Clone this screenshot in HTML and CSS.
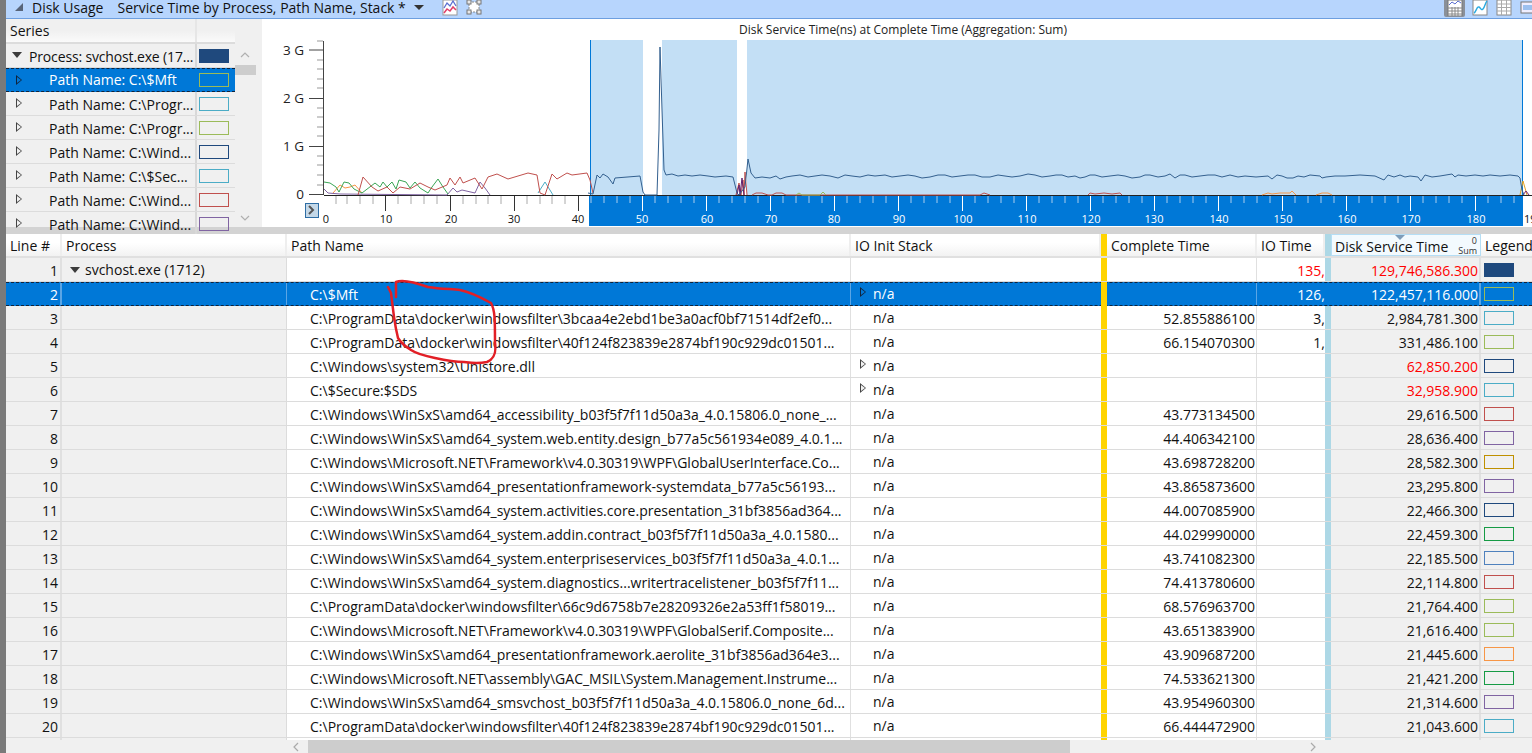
FILE: index.html
```html
<!DOCTYPE html>
<html lang="en">
<head>
<meta charset="utf-8">
<title>Disk Usage</title>
<link rel="stylesheet" href="styles.css">
</head>
<body>
<div class="app">
  <header class="bar">
    <span class="bar-collapse"></span>
    <span class="bar-title">Disk Usage</span>
    <span class="bar-preset">Service Time by Process, Path Name, Stack *</span>
    <span class="bar-drop"></span>
    <svg class="ic" viewBox="0 0 16 16"><rect x="1" y="0" width="14" height="15" fill="#fff" stroke="#999"/><path d="M2 8l3-5 3 3 3-5 3 5" fill="none" stroke="#5a6ed0" stroke-width="1.300"/><path d="M2 13l3-4 3 2 3-4 3 3" fill="none" stroke="#e0406a" stroke-width="1.500"/></svg>
    <svg class="ic ic2" viewBox="0 0 16 16"><rect x="3" y="2" width="10" height="10" fill="#fff" stroke="#888" stroke-dasharray="2 1"/><rect x="1" y="0" width="4" height="4" fill="#e8e8e8" stroke="#777"/><rect x="11" y="0" width="4" height="4" fill="#e8e8e8" stroke="#777"/><rect x="1" y="10" width="4" height="4" fill="#e8e8e8" stroke="#777"/><rect x="11" y="10" width="4" height="4" fill="#e8e8e8" stroke="#777"/></svg>
    <span class="bar-fill"></span>
    <span class="view-sel"><svg class="ic" viewBox="0 0 16 16"><rect x="1" y="0" width="14" height="16" fill="#fff" stroke="#777"/><path d="M2 5l3-3 3 2 3-3 3 2" fill="none" stroke="#5a6ed0"/><path d="M1 8h14M1 11h14M1 14h14M5 7v9M8 7v9M11 7v9" stroke="#888"/></svg></span>
    <svg class="ic view" viewBox="0 0 16 16"><rect x="1" y="0" width="14" height="15" fill="#fff" stroke="#888"/><path d="M2 13c2-1 3-7 5-6s2 4 4 2 2-6 4-8" fill="none" stroke="#29a9e0" stroke-width="1.400"/></svg>
    <svg class="ic view" viewBox="0 0 16 16"><rect x="1" y="0" width="14" height="15" fill="#fff" stroke="#888"/><path d="M1 4h14M1 7.500h14M1 11h14M5.500 0v15M10.500 0v15" stroke="#aaa"/></svg>
    <svg class="ic view view-last" viewBox="0 0 16 16"><rect x="1" y="2" width="15" height="11" fill="#eef" stroke="#777"/><rect x="3" y="5" width="12" height="5" fill="#9cc0ee"/></svg>
  </header>

  <section class="top">
    <aside class="series">
      <div class="series-head"><span class="sh-name">Series</span><span class="sh-key"></span></div>
      <div class="series-row"><span class="tw tw-open"></span><span class="sr-name sr-root">Process: svchost.exe (17...</span><span class="sr-key"><i class="sw fill navy"></i></span></div>
      <div class="series-row sel"><span class="tw tw-closed"></span><span class="sr-name">Path Name: C:\$Mft</span><span class="sr-key"><i class="sw olive"></i></span></div>
      <div class="series-row"><span class="tw tw-closed"></span><span class="sr-name">Path Name: C:\Progr...</span><span class="sr-key"><i class="sw cyan"></i></span></div>
      <div class="series-row"><span class="tw tw-closed"></span><span class="sr-name">Path Name: C:\Progr...</span><span class="sr-key"><i class="sw olive"></i></span></div>
      <div class="series-row"><span class="tw tw-closed"></span><span class="sr-name">Path Name: C:\Wind...</span><span class="sr-key"><i class="sw navy"></i></span></div>
      <div class="series-row"><span class="tw tw-closed"></span><span class="sr-name">Path Name: C:\$Sec...</span><span class="sr-key"><i class="sw cyan"></i></span></div>
      <div class="series-row"><span class="tw tw-closed"></span><span class="sr-name">Path Name: C:\Wind...</span><span class="sr-key"><i class="sw red"></i></span></div>
      <div class="series-row"><span class="tw tw-closed"></span><span class="sr-name">Path Name: C:\Wind...</span><span class="sr-key"><i class="sw purple"></i></span></div>
    </aside>
    <div class="vscroll">
      <svg class="chev" viewBox="0 0 10 6"><path d="M1 5l4-4 4 4" fill="none" stroke="#b0b0b0" stroke-width="1.200"/></svg>
      <span class="vthumb"></span>
      <span class="vspace"></span>
      <svg class="chev" viewBox="0 0 10 6"><path d="M1 1l4 4 4-4" fill="none" stroke="#b0b0b0" stroke-width="1.200"/></svg>
    </div>
    <div class="chart">
      <svg class="plot" width="1270" height="208" viewBox="262 19 1270 208">
        <text class="t-title" x="903" y="34" text-anchor="middle">Disk Service Time(ns) at Complete Time (Aggregation: Sum)</text>
        <g fill="#c3dff5"><rect x="590" y="40" width="53" height="155"/><rect x="662" y="40" width="75" height="155"/><rect x="747" y="40" width="775" height="155"/></g>
        <rect x="589" y="196" width="934" height="30" fill="#0078d7"/>
        <path d="M590.500 40v156M1522.500 40v156" stroke="#0078d7" fill="none"/>
        <path d="M323.500 41v154M309 50h14M309 98.500h14M309 146.500h14M309 194.500h14" stroke="#444" fill="none"/>
        <path d="M317 60h6M317 69h6M317 79h6M317 88h6M317 108h6M317 117h6M317 127h6M317 136h6M317 156h6M317 165h6M317 175h6M317 185h6M317 41h6" stroke="#999" fill="none"/>
        <text class="t-y" x="304" y="55" text-anchor="end">3 G</text>
        <text class="t-y" x="304" y="103" text-anchor="end">2 G</text>
        <text class="t-y" x="304" y="151" text-anchor="end">1 G</text>
        <text class="t-y" x="304" y="199" text-anchor="end">0</text>
        <path d="M385.500 196v15M450.500 196v15M514.500 196v15M578.500 196v15" stroke="#333" fill="none"/>
        <path d="M336 196v8M347 196v8M360 196v8M373 196v8M398 196v8M411 196v8M424 196v8M437 196v8M463 196v8M476 196v8M488 196v8M501 196v8M527 196v8M540 196v8M552 196v8M565 196v8" stroke="#aaa" fill="none"/>
        <g stroke="#fff" fill="none">
          <path d="M642.500 196v15M706.500 196v15M770.500 196v15M834.500 196v15M898.500 196v15M962.500 196v15M1026.500 196v15M1090.500 196v15M1154.500 196v15M1218.500 196v15M1282.500 196v15M1346.500 196v15M1410.500 196v15M1475.500 196v15"/>
          <path stroke="#a9cdee" d="M591 196v7M604 196v7M617 196v7M630 196v7M655 196v7M668 196v7M681 196v7M694 196v7M719 196v7M732 196v7M745 196v7M758 196v7M783 196v7M796 196v7M809 196v7M822 196v7M847 196v7M860 196v7M873 196v7M886 196v7M911 196v7M924 196v7M937 196v7M950 196v7M975 196v7M988 196v7M1001 196v7M1014 196v7M1039 196v7M1052 196v7M1065 196v7M1078 196v7M1103 196v7M1116 196v7M1129 196v7M1142 196v7M1167 196v7M1180 196v7M1193 196v7M1206 196v7M1231 196v7M1244 196v7M1257 196v7M1270 196v7M1295 196v7M1308 196v7M1321 196v7M1334 196v7M1359 196v7M1372 196v7M1385 196v7M1398 196v7M1423 196v7M1436 196v7M1449 196v7M1462 196v7M1488 196v7M1501 196v7M1514 196v7"/>
        </g>
        <path d="M324 195.500H1532" stroke="#222" fill="none"/>
        <g fill="none">
          <polyline stroke="#f79646" points="333,193 340,185 345,188 350,187 355,185 362,193"/>
          <polyline stroke="#8064a2" points="324,189 328,193 340,194 447,195 453,188 457,192 462,190 475,193 480,182 485,188 490,195"/>
          <polyline stroke="#3aa655" points="324,182 330,183 336,187 339,192 344,182 349,183 354,189 362,193 375,183 380,187 383,182 387,187 392,182 396,189 399,180 406,182 410,188 415,182 420,188 428,193 432,187 438,179 443,187 448,194"/>
          <polyline stroke="#4bacc6" points="538,193 545,182 553,195"/>
          <polyline stroke="#c0504d" points="358,195 363,177 372,187 378,191 387,187 393,193 400,187 410,189 420,183 428,187 435,190 447,185 450,178 455,185 460,177 463,183 475,178 482,189 488,177 497,174 508,179 528,173 537,175 540,193 545,195 552,174 557,179 567,173 572,175 587,173 590,180 593,193"/>
          <polyline stroke="#c0504d" points="736,195 739,183 741,195 743,180 744,195 745,172 747,195"/>
          <polyline stroke="#5e1f6e" points="737,195 739,185 740,195 742,178 744,195"/>
          <polyline stroke="#c0504d" points="752,195 756,193 762,193 768,195 772,195 776,193 782,193 786,195 980,195 984,193 990,195"/>
          <polyline stroke="#9bbb59" points="796,195 799,193 802,195 820,195 823,192 826,195"/>
          <polyline stroke="#c0504d" points="1088,195 1090,193 1095,194 1104,193 1112,194 1120,193 1122,195"/>
          <polyline stroke="#f79646" points="1262,195 1268,193 1272,194 1280,193 1290,193 1292,191 1296,195"/>
          <polyline stroke="#f79646" points="1316,195 1322,193 1328,193 1332,195"/>
          <polyline stroke="#e0a020" points="1520,195 1523,181 1527,195"/>
          <polyline stroke="#7a1f6e" points="1523,195 1526,191 1529,195"/>
          <polyline stroke="#33608f" points="588,193 593,194 597,175 600,178 603,174 608,177 613,184 615,178 640,176 643,192 645,195 657,195 659,130 660,47 662,110 664,170 666,175 672,174 678,176 685,175 692,176 700,175 708,176 715,177 726,176 733,177 737,193 739,195 745,187 748,159 751,173 755,178 762,177 770,178 776,176 780,179 786,177 792,176 800,175 808,177 815,176 822,175 830,176 838,178 845,175 852,176 860,177 868,175 875,176 885,175 892,177 900,176 908,175 915,176 922,178 930,177 938,175 945,175 952,177 960,176 968,175 975,175 982,177 990,177 998,175 1005,176 1012,177 1020,176 1028,174 1035,175 1042,177 1050,176 1056,175 1062,175 1068,177 1075,176 1080,178 1085,177 1090,175 1095,175 1102,177 1110,176 1118,175 1125,176 1132,178 1140,177 1145,175 1150,175 1158,177 1165,176 1170,174 1175,178 1180,175 1185,175 1192,177 1200,176 1208,175 1215,175 1222,177 1230,175 1238,177 1245,176 1256,177 1268,176 1272,179 1277,175 1282,176 1287,178 1293,178 1298,176 1304,177 1310,175 1320,176 1322,178 1326,177 1335,176 1345,176 1360,175 1375,176 1384,180 1388,175 1394,177 1400,175 1405,177 1410,176 1418,177 1421,181 1425,175 1432,177 1440,176 1446,175 1452,174 1455,177 1458,175 1466,176 1475,175 1483,176 1490,175 1500,176 1510,175 1518,176 1520,178 1522,190 1524,195"/>
        </g>
        <g class="t-x"><text x="326" y="223" text-anchor="middle">0</text><text x="386" y="223" text-anchor="middle">10</text><text x="451" y="223" text-anchor="middle">20</text><text x="514" y="223" text-anchor="middle">30</text><text x="578" y="223" text-anchor="middle">40</text></g>
        <g class="t-x t-w"><text x="642" y="223" text-anchor="middle">50</text><text x="707" y="223" text-anchor="middle">60</text><text x="771" y="223" text-anchor="middle">70</text><text x="834" y="223" text-anchor="middle">80</text><text x="899" y="223" text-anchor="middle">90</text><text x="963" y="223" text-anchor="middle">100</text><text x="1027" y="223" text-anchor="middle">110</text><text x="1091" y="223" text-anchor="middle">120</text><text x="1154" y="223" text-anchor="middle">130</text><text x="1219" y="223" text-anchor="middle">140</text><text x="1283" y="223" text-anchor="middle">150</text><text x="1347" y="223" text-anchor="middle">160</text><text x="1411" y="223" text-anchor="middle">170</text><text x="1476" y="223" text-anchor="middle">180</text></g>
        <text class="t-x" x="1524" y="223">19</text>
        <rect x="305.500" y="203.500" width="13" height="14" fill="#c4d8e8" stroke="#2e6da4"/>
        <path d="M309 206l4 4-4 4" fill="none" stroke="#555" stroke-width="2"/>
      </svg>
    </div>
  </section>

  <div class="split"></div>

  <section class="table">
    <div class="row head">
      <div class="c c-line">Line #</div><div class="c c-proc">Process</div><div class="c c-path">Path Name</div><div class="c c-stack">IO Init Stack</div><div class="gold"></div><div class="c c-comp">Complete Time</div><div class="c c-io">IO Time</div><div class="blue"></div><div class="c c-disk">Disk Service Time<span class="sort"></span><span class="agg"><b>0</b><b>Sum</b></span></div><div class="c c-leg">Legend</div>
    </div>
    <div class="row"><div class="c c-line">1</div><div class="c c-proc"><span class="tw tw-open"></span>svchost.exe (1712)</div><div class="c c-path"></div><div class="c c-stack"></div><div class="gold"></div><div class="c c-comp"></div><div class="c c-io hot">135,</div><div class="blue"></div><div class="c c-disk hot">129,746,586.300</div><div class="c c-leg"><i class="sw fill navy"></i></div></div>
    <div class="row sel"><div class="c c-line">2</div><div class="c c-proc"></div><div class="c c-path">C:\$Mft</div><div class="c c-stack"><span class="tw tw-closed"></span>n/a</div><div class="gold"></div><div class="c c-comp"></div><div class="c c-io">126,</div><div class="blue"></div><div class="c c-disk">122,457,116.000</div><div class="c c-leg"><i class="sw olive"></i></div></div>
    <div class="row"><div class="c c-line">3</div><div class="c c-proc"></div><div class="c c-path">C:\ProgramData\docker\windowsfilter\3bcaa4e2ebd1be3a0acf0bf71514df2ef0...</div><div class="c c-stack pad">n/a</div><div class="gold"></div><div class="c c-comp">52.855886100</div><div class="c c-io">3,</div><div class="blue"></div><div class="c c-disk">2,984,781.300</div><div class="c c-leg"><i class="sw cyan"></i></div></div>
    <div class="row"><div class="c c-line">4</div><div class="c c-proc"></div><div class="c c-path">C:\ProgramData\docker\windowsfilter\40f124f823839e2874bf190c929dc01501...</div><div class="c c-stack pad">n/a</div><div class="gold"></div><div class="c c-comp">66.154070300</div><div class="c c-io">1,</div><div class="blue"></div><div class="c c-disk">331,486.100</div><div class="c c-leg"><i class="sw olive"></i></div></div>
    <div class="row"><div class="c c-line">5</div><div class="c c-proc"></div><div class="c c-path">C:\Windows\system32\Unistore.dll</div><div class="c c-stack"><span class="tw tw-closed"></span>n/a</div><div class="gold"></div><div class="c c-comp"></div><div class="c c-io"></div><div class="blue"></div><div class="c c-disk hot">62,850.200</div><div class="c c-leg"><i class="sw navy"></i></div></div>
    <div class="row"><div class="c c-line">6</div><div class="c c-proc"></div><div class="c c-path">C:\$Secure:$SDS</div><div class="c c-stack"><span class="tw tw-closed"></span>n/a</div><div class="gold"></div><div class="c c-comp"></div><div class="c c-io"></div><div class="blue"></div><div class="c c-disk hot">32,958.900</div><div class="c c-leg"><i class="sw cyan"></i></div></div>
    <div class="row"><div class="c c-line">7</div><div class="c c-proc"></div><div class="c c-path">C:\Windows\WinSxS\amd64_accessibility_b03f5f7f11d50a3a_4.0.15806.0_none_...</div><div class="c c-stack pad">n/a</div><div class="gold"></div><div class="c c-comp">43.773134500</div><div class="c c-io"></div><div class="blue"></div><div class="c c-disk">29,616.500</div><div class="c c-leg"><i class="sw red"></i></div></div>
    <div class="row"><div class="c c-line">8</div><div class="c c-proc"></div><div class="c c-path">C:\Windows\WinSxS\amd64_system.web.entity.design_b77a5c561934e089_4.0.1...</div><div class="c c-stack pad">n/a</div><div class="gold"></div><div class="c c-comp">44.406342100</div><div class="c c-io"></div><div class="blue"></div><div class="c c-disk">28,636.400</div><div class="c c-leg"><i class="sw purple"></i></div></div>
    <div class="row"><div class="c c-line">9</div><div class="c c-proc"></div><div class="c c-path">C:\Windows\Microsoft.NET\Framework\v4.0.30319\WPF\GlobalUserInterface.Co...</div><div class="c c-stack pad">n/a</div><div class="gold"></div><div class="c c-comp">43.698728200</div><div class="c c-io"></div><div class="blue"></div><div class="c c-disk">28,582.300</div><div class="c c-leg"><i class="sw gold-k"></i></div></div>
    <div class="row"><div class="c c-line">10</div><div class="c c-proc"></div><div class="c c-path">C:\Windows\WinSxS\amd64_presentationframework-systemdata_b77a5c56193...</div><div class="c c-stack pad">n/a</div><div class="gold"></div><div class="c c-comp">43.865873600</div><div class="c c-io"></div><div class="blue"></div><div class="c c-disk">23,295.800</div><div class="c c-leg"><i class="sw purple"></i></div></div>
    <div class="row"><div class="c c-line">11</div><div class="c c-proc"></div><div class="c c-path">C:\Windows\WinSxS\amd64_system.activities.core.presentation_31bf3856ad364...</div><div class="c c-stack pad">n/a</div><div class="gold"></div><div class="c c-comp">44.007085900</div><div class="c c-io"></div><div class="blue"></div><div class="c c-disk">22,466.300</div><div class="c c-leg"><i class="sw navy"></i></div></div>
    <div class="row"><div class="c c-line">12</div><div class="c c-proc"></div><div class="c c-path">C:\Windows\WinSxS\amd64_system.addin.contract_b03f5f7f11d50a3a_4.0.1580...</div><div class="c c-stack pad">n/a</div><div class="gold"></div><div class="c c-comp">44.029990000</div><div class="c c-io"></div><div class="blue"></div><div class="c c-disk">22,459.300</div><div class="c c-leg"><i class="sw green"></i></div></div>
    <div class="row"><div class="c c-line">13</div><div class="c c-proc"></div><div class="c c-path">C:\Windows\WinSxS\amd64_system.enterpriseservices_b03f5f7f11d50a3a_4.0.1...</div><div class="c c-stack pad">n/a</div><div class="gold"></div><div class="c c-comp">43.741082300</div><div class="c c-io"></div><div class="blue"></div><div class="c c-disk">22,185.500</div><div class="c c-leg"><i class="sw steel"></i></div></div>
    <div class="row"><div class="c c-line">14</div><div class="c c-proc"></div><div class="c c-path">C:\Windows\WinSxS\amd64_system.diagnostics...writertracelistener_b03f5f7f11...</div><div class="c c-stack pad">n/a</div><div class="gold"></div><div class="c c-comp">74.413780600</div><div class="c c-io"></div><div class="blue"></div><div class="c c-disk">22,114.800</div><div class="c c-leg"><i class="sw red"></i></div></div>
    <div class="row"><div class="c c-line">15</div><div class="c c-proc"></div><div class="c c-path">C:\ProgramData\docker\windowsfilter\66c9d6758b7e28209326e2a53ff1f58019...</div><div class="c c-stack pad">n/a</div><div class="gold"></div><div class="c c-comp">68.576963700</div><div class="c c-io"></div><div class="blue"></div><div class="c c-disk">21,764.400</div><div class="c c-leg"><i class="sw olive"></i></div></div>
    <div class="row"><div class="c c-line">16</div><div class="c c-proc"></div><div class="c c-path">C:\Windows\Microsoft.NET\Framework\v4.0.30319\WPF\GlobalSerif.Composite...</div><div class="c c-stack pad">n/a</div><div class="gold"></div><div class="c c-comp">43.651383900</div><div class="c c-io"></div><div class="blue"></div><div class="c c-disk">21,616.400</div><div class="c c-leg"><i class="sw olive"></i></div></div>
    <div class="row"><div class="c c-line">17</div><div class="c c-proc"></div><div class="c c-path">C:\Windows\WinSxS\amd64_presentationframework.aerolite_31bf3856ad364e3...</div><div class="c c-stack pad">n/a</div><div class="gold"></div><div class="c c-comp">43.909687200</div><div class="c c-io"></div><div class="blue"></div><div class="c c-disk">21,445.600</div><div class="c c-leg"><i class="sw orange"></i></div></div>
    <div class="row"><div class="c c-line">18</div><div class="c c-proc"></div><div class="c c-path">C:\Windows\Microsoft.NET\assembly\GAC_MSIL\System.Management.Instrume...</div><div class="c c-stack pad">n/a</div><div class="gold"></div><div class="c c-comp">74.533621300</div><div class="c c-io"></div><div class="blue"></div><div class="c c-disk">21,421.200</div><div class="c c-leg"><i class="sw green"></i></div></div>
    <div class="row"><div class="c c-line">19</div><div class="c c-proc"></div><div class="c c-path">C:\Windows\WinSxS\amd64_smsvchost_b03f5f7f11d50a3a_4.0.15806.0_none_6d...</div><div class="c c-stack pad">n/a</div><div class="gold"></div><div class="c c-comp">43.954960300</div><div class="c c-io"></div><div class="blue"></div><div class="c c-disk">21,314.600</div><div class="c c-leg"><i class="sw purple"></i></div></div>
    <div class="row"><div class="c c-line">20</div><div class="c c-proc"></div><div class="c c-path">C:\ProgramData\docker\windowsfilter\40f124f823839e2874bf190c929dc01501...</div><div class="c c-stack pad">n/a</div><div class="gold"></div><div class="c c-comp">66.444472900</div><div class="c c-io"></div><div class="blue"></div><div class="c c-disk">21,043.600</div><div class="c c-leg"><i class="sw cyan"></i></div></div>
    <div class="row tail"><div class="c c-line"></div><div class="c c-proc"></div><div class="c c-path"></div><div class="c c-stack"></div><div class="gold"></div><div class="c c-comp"></div><div class="c c-io"></div><div class="blue"></div><div class="c c-disk"></div><div class="c c-leg"></div></div>
    <svg class="scribble" viewBox="0 0 130 100" width="130" height="100"><path d="M14 19L14 4C21 1 35 5 46 9C58 11 70 11 78 12C88 14 100 20 109 25C113 32 113 42 113 65C114 72 114 80 105 84C95 86 90 85 82 84C72 84 62 82 53 80C43 78 35 76 29 72C24 69 19 65 16 60C14 52 13 46 12 39L9 15L6 9" fill="none" stroke="#e21f26" stroke-width="2.500" stroke-linecap="round" stroke-linejoin="round"/></svg>
  </section>

  <footer class="hscroll">
    <svg class="hchev" viewBox="0 0 6 10"><path d="M5 1L1 5l4 4" fill="none" stroke="#aaa" stroke-width="1.200"/></svg>
    <span class="hthumb"></span>
    <svg class="hchev" viewBox="0 0 6 10"><path d="M1 1l4 4-4 4" fill="none" stroke="#aaa" stroke-width="1.200"/></svg>
  </footer>
</div>
</body>
</html>
```
FILE: styles.css
```css
* { box-sizing: border-box; }
html, body { margin: 0; padding: 0; height: 100%; overflow: hidden; }
body { background: #fff; font-family: "Open Sans", "Noto Sans", "Liberation Sans", sans-serif; font-size: 14px; color: #111; }
.app { width: 1532px; height: 753px; display: flex; flex-direction: column; overflow: hidden; border-left: 6px solid #7a7a7a; position: relative; }

.bar { height: 19px; flex: none; background: #b7d5fd; border-bottom: 1px solid #6d9fe0; display: flex; align-items: flex-start; padding-left: 9px; line-height: 15px; }
.bar-collapse { width: 0; height: 0; border-style: solid; border-width: 0 0 8px 8px; border-color: transparent transparent #58657a transparent; margin: 3px 9px 0 0; }
.bar-title { margin-right: 14px; }
.bar-drop { width: 0; height: 0; border-style: solid; border-width: 5px 5px 0; border-color: #333 transparent transparent; margin: 5px 18px 0 8px; }
.ic { width: 16px; height: 16px; flex: none; }
.ic2 { margin-left: 8px; }
.bar-fill { flex: 1; }
.view-sel { width: 21px; height: 17px; background: #8a9099; display: flex; justify-content: center; border-radius: 0 0 2px 2px; margin-right: 7px; }
.view { margin-right: 8px; }
.view-last { margin-right: -4px; }

.top { height: 208px; flex: none; display: flex; }
.series { width: 229px; flex: none; background: #f0f0f0; }
.series-head { height: 25px; display: flex; background: linear-gradient(#f0f0f0 50%, #fafafa); border-bottom: 2px solid #dcdcdc; }
.sh-name { width: 191px; padding-left: 4px; border-right: 2px solid #e6e6e6; line-height: 24px; }
.series-row { height: 24px; display: flex; align-items: center; border-bottom: 1px solid #dcdcdc; position: relative; }
.sr-name { width: 191px; padding-left: 43px; border-right: 2px solid #d8d8d8; height: 100%; line-height: 25px; white-space: nowrap; overflow: hidden; }
.sr-root { padding-left: 23px; letter-spacing: -0.15px; }
.sr-key { padding-left: 2px; }
.series-row.sel { background: #0078d7; color: #fff; border-top: 1px dashed #10243c; border-bottom: 1px dashed #10243c; }
.series-row.sel .sr-name { border-right-color: #0078d7; line-height: 22px; }
.series-row .tw { position: absolute; left: 10px; top: 6px; }
.series-row .tw-open { left: 6px; top: 8px; }
.tw { display: inline-block; width: 0; height: 0; flex: none; }
.tw-open { border-style: solid; border-width: 6px 5px 0 5px; border-color: #3c3c3c transparent transparent; }
.tw-closed { border-style: solid; border-width: 5px 0 5px 6px; border-color: transparent transparent transparent #444; position: relative; margin-top: -4px; }
.tw-closed::after { content: ""; position: absolute; left: -5px; top: -3px; width: 0; height: 0; border-style: solid; border-width: 3px 0 3px 4px; border-color: transparent transparent transparent #f2f2f2; }
.series-row .tw-closed { position: absolute; margin-top: 0; }
.sel .tw-closed { border-left-color: #10243c; }
.sel .tw-closed::after { border-left-color: #0078d7; }
.sw { display: block; width: 30px; height: 14px; border: 1px solid; }
.sw.fill { background: #1f497d; }
.sw.navy { border-color: #1f497d; }
.sw.olive { border-color: #9bbb59; }
.sw.cyan { border-color: #4bacc6; }
.sw.red { border-color: #c0504d; }
.sw.purple { border-color: #8064a2; }
.sw.orange { border-color: #f79646; }
.sw.green { border-color: #169b45; }
.sw.gold-k { border-color: #bf9000; }
.sw.steel { border-color: #4f81bd; }

.vscroll { width: 27px; flex: none; background: #f0f0f0; display: flex; flex-direction: column; align-items: flex-start; padding: 33px 0 6px; }
.chev { width: 10px; height: 6px; flex: none; margin-left: 5px; }
.vthumb { width: 21px; height: 10px; background: #cdcdcd; margin-top: 7px; flex: none; }
.vspace { flex: 1; }
.chart { flex: 1; background: #fff; position: relative; }
.plot { display: block; }
.t-title { font-size: 12px; fill: #222; }
.t-y { font-size: 13.500px; fill: #222; }
.t-x text, text.t-x { font-size: 11px; fill: #111; }
.t-w text { fill: #fff; }

.split { height: 7px; flex: none; background: #d3d3d3; }

.table { flex: 1; display: flex; flex-direction: column; position: relative; overflow: hidden; }
.row { height: 24px; flex: none; display: flex; border-bottom: 1px solid #dcdcdc; background: #fff; }
.c { height: 100%; line-height: 25px; white-space: nowrap; overflow: hidden; padding: 0 3px; border-right: 1px solid #e0e0e0; position: relative; }
.c-line { width: 56px; text-align: right; background: #f0f0f0; border-right-width: 2px; padding-right: 2px; }
.c-proc { width: 225px; background: #f0f0f0; border-right-color: #dcdcdc; padding-left: 8px; display: flex; align-items: center; gap: 5px; }
.c-path { width: 564px; padding-left: 23px; }
.c-stack { width: 250px; padding-left: 9px; display: flex; align-items: center; gap: 7px; border-right: none; }
.c-stack.pad { padding-left: 22px; }
.gold { width: 6px; flex: none; background: #ffd400; }
.c-comp { width: 150px; text-align: right; padding-right: 1px; }
.c-io { width: 68px; text-align: right; border-right: none; padding-right: 0; }
.blue { width: 6px; flex: none; background: #add8e6; }
.c-disk { width: 150px; text-align: right; background: #f0f0f0; border-right: 2px solid #e0e0e0; padding-right: 1px; }
.c-leg { flex: 1; background: #f0f0f0; border-right: none; padding: 5px 0 0 3px; }
.hot { color: #f00; }
.head { height: 24px; border-bottom: 2px solid #e0e0e0; background: linear-gradient(#fff 40%, #f2f2f2); }
.head .c { background: transparent; text-align: left; line-height: 23px; border-right: 2px solid #eee; padding-left: 4px; display: block; }
.head .c-disk { background: #f3fafe; border: 1px solid #b5def5; padding-left: 3px; }
.head .c-leg { padding: 0 0 0 4px; border: none; }
.sort { position: absolute; left: 63px; top: 0; width: 0; height: 0; border-style: solid; border-width: 5px 5px 0; border-color: #7f9db9 transparent transparent; }
.agg { position: absolute; right: 3px; top: 1px; display: flex; flex-direction: column; align-items: flex-end; font-size: 9px; line-height: 10px; color: #333; }
.agg b { font-weight: normal; }
.row.sel { background: #0078d7; color: #fff; border-top: 1px dashed #10243c; border-bottom: 1px dashed #10243c; }
.row.sel .c { background: #0078d7; border-right-color: #5aa5e5; line-height: 24px; }
.row.sel .c-stack { border-right: none; }
.row.sel .gold { margin: -1px 0; }
.row.sel .blue { background: #0078d7; }
.row.sel .c-leg { padding-top: 4px; }
.tail { flex: 1; border-bottom: none; }

.scribble { position: absolute; left: 376px; top: 44px; }
.hscroll { height: 13px; flex: none; background: #f0f0f0; display: flex; align-items: center; padding-left: 287px; }
.hchev { width: 6px; height: 10px; flex: none; }
.hthumb { width: 762px; height: 13px; background: #cdcdcd; margin: 0 240px 0 9px; flex: none; }
```
